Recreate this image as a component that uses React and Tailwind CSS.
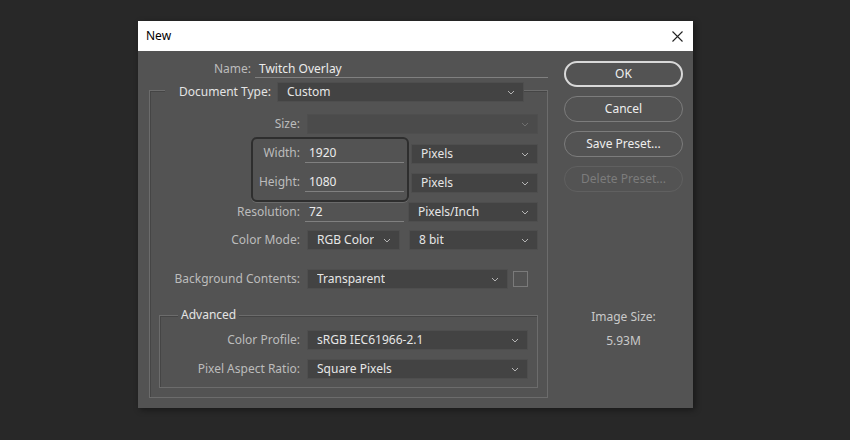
import React from 'react';

const Chevron = ({ dim }) => (
  <svg width="8" height="5" viewBox="0 0 8 5" className="shrink-0">
    <path d="M1 1 L4 4 L7 1" fill="none" stroke={dim ? '#6f6f6f' : '#b4b4b4'} strokeWidth="1" />
  </svg>
);

const Select = ({ value, className = '', disabled }) => (
  <div
    className={`h-[20px] flex items-center justify-between pl-[9px] pr-[8px] border border-[#4e4e4e] ${
      disabled ? 'bg-[#4b4b4b]' : 'bg-[#434343]'
    } ${className}`}
  >
    <span className="text-[#e6e6e6] truncate">{value}</span>
    <Chevron dim={disabled} />
  </div>
);

const Label = ({ children, className = '' }) => (
  <span className={`shrink-0 text-right text-[#bcbcbc] ${className}`}>{children}</span>
);

const Field = ({ value, className = '' }) => (
  <div className={`h-[20px] flex items-center pl-[4px] border-b border-[#808080] text-[#ececec] ${className}`}>
    {value}
  </div>
);

const PillButton = ({ children, variant }) => {
  const styles = {
    primary: 'border-2 border-[#d9d9d9] text-[#f0f0f0]',
    normal: 'border border-[#7c7c7c] text-[#eeeeee]',
    disabled: 'border border-[#606060] text-[#7c7c7c]',
  };
  return (
    <div className={`h-[26px] w-[119px] rounded-full flex items-center justify-center ${styles[variant]}`}>
      {children}
    </div>
  );
};

export default function App() {
  return (
    <div
      className="w-[850px] h-[440px] bg-[#282828] pt-[21px] pl-[138px] text-[12px]"
      style={{ fontFamily: '"Segoe UI", "Noto Sans", "Open Sans", sans-serif' }}
    >
      <div className="w-[555px] h-[387px] bg-[#535353] flex flex-col shadow-[2px_2px_6px_rgba(0,0,0,0.4)]">
        {/* Title bar */}
        <div className="h-[30px] bg-white flex items-center justify-between pl-[8px] pr-[10px] shrink-0">
          <span className="text-black text-[12px]">New</span>
          <svg width="11" height="11" viewBox="0 0 11 11">
            <path d="M0.5 0.5 L10.5 10.5 M10.5 0.5 L0.5 10.5" stroke="#222" strokeWidth="1.1" />
          </svg>
        </div>

        <div className="flex flex-1">
          {/* Form column */}
          <div className="w-[415px] pl-[11px] pt-[6px]">
            {/* Name */}
            <div className="flex items-start h-[20px]">
              <Label className="w-[102px] text-[#aeaeae] mt-[3px]">Name:</Label>
              <Field value="Twitch Overlay" className="ml-[4px] w-[293px] pl-[4px] pt-[4px] !h-[21px]" />
            </div>

            {/* Main group box */}
            <div className="mt-[13px] w-[399px] h-[308px] border border-[#6c6c6c] shadow-[inset_1px_1px_0_#454545]">
              {/* Document type legend */}
              <div className="-mt-[9px] ml-[15px] flex items-center">
                <span className="bg-[#535353] pl-[14px] pr-[6px] h-[20px] flex items-center text-[#e4e4e4]">
                  Document Type:
                </span>
                <Select value="Custom" className="w-[247px]" />
              </div>

              {/* Size */}
              <div className="mt-[12px] flex items-center">
                <Label className="w-[150px] text-[#7b7b7b]">Size:</Label>
                <Select value="" disabled className="ml-[7px] w-[231px]" />
              </div>

              {/* Width / Height */}
              <div className="mt-[3px] ml-[101px] flex">
                <div className="w-[158px] h-[65px] rounded-[6px] border-2 border-[#2e2e2e] shadow-[0_1px_0_#6a6a6a] pt-[4px]">
                  <div className="flex items-center">
                    <Label className="w-[47px]">Width:</Label>
                    <Field value="1920" className="ml-[5px] w-[99px]" />
                  </div>
                  <div className="mt-[9px] flex items-center">
                    <Label className="w-[47px]">Height:</Label>
                    <Field value="1080" className="ml-[5px] w-[99px]" />
                  </div>
                </div>
                <div className="ml-[2px] w-[127px] pt-[7px]">
                  <Select value="Pixels" />
                  <Select value="Pixels" className="mt-[9px]" />
                </div>
              </div>

              {/* Resolution */}
              <div className="flex items-center">
                <Label className="w-[150px]">Resolution:</Label>
                <Field value="72" className="ml-[5px] w-[99px]" />
                <Select value="Pixels/Inch" className="ml-[4px] w-[130px]" />
              </div>

              {/* Color mode */}
              <div className="mt-[8px] flex items-center">
                <Label className="w-[150px]">Color Mode:</Label>
                <Select value="RGB Color" className="ml-[7px] w-[93px]" />
                <Select value="8 bit" className="ml-[9px] w-[129px]" />
              </div>

              {/* Background contents */}
              <div className="mt-[19px] flex items-center">
                <Label className="w-[150px]">Background Contents:</Label>
                <Select value="Transparent" className="ml-[7px] w-[201px]" />
                <div className="ml-[5px] w-[15px] h-[16px] border border-[#7a7a7a]" />
              </div>

              {/* Advanced group */}
              <div className="mt-[26px] ml-[9px] w-[379px] h-[73px] border border-[#6c6c6c] shadow-[inset_1px_1px_0_#454545]">
                <div className="-mt-[9px] ml-[18px] flex">
                  <span className="bg-[#535353] px-[3px] h-[16px] flex items-center text-[#e4e4e4]">Advanced</span>
                </div>
                <div className="mt-[7px] flex items-center">
                  <Label className="w-[140px]">Color Profile:</Label>
                  <Select value="sRGB IEC61966-2.1" className="ml-[7px] w-[221px]" />
                </div>
                <div className="mt-[9px] flex items-center">
                  <Label className="w-[140px]">Pixel Aspect Ratio:</Label>
                  <Select value="Square Pixels" className="ml-[7px] w-[221px]" />
                </div>
              </div>
            </div>
          </div>

          {/* Buttons column */}
          <div className="ml-[11px] pt-[10px] flex flex-col">
            <div className="flex flex-col gap-[9px]">
              <PillButton variant="primary">OK</PillButton>
              <PillButton variant="normal">Cancel</PillButton>
              <PillButton variant="normal">Save Preset...</PillButton>
              <PillButton variant="disabled">Delete Preset...</PillButton>
            </div>
            <div className="mt-[116px] w-[119px] flex flex-col items-center text-[#c9c9c9]">
              <span>Image Size:</span>
              <span className="mt-[6px]">5.93M</span>
            </div>
          </div>
        </div>
      </div>
    </div>
  );
}
